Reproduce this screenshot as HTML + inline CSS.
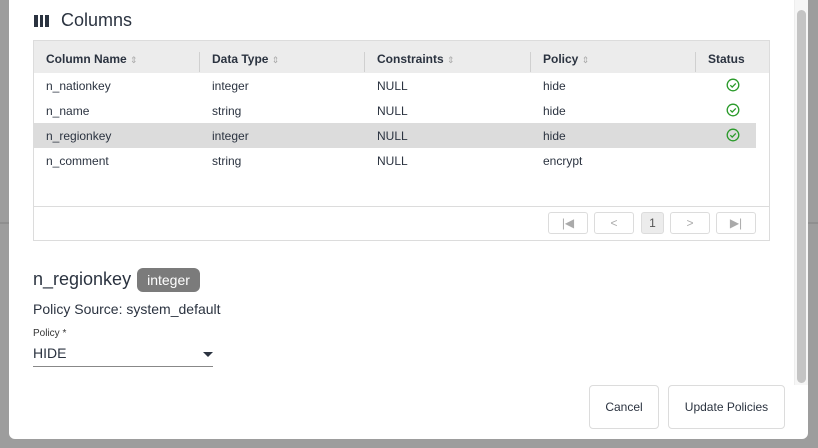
<!DOCTYPE html>
<html><head><style>
*{box-sizing:border-box;margin:0;padding:0}
body{width:818px;height:448px;background:#9d9d9d;font-family:"Liberation Sans",Arial,sans-serif;position:relative;overflow:hidden;color:#2b3340}
.ov{position:absolute;left:0;top:222px;width:818px;height:2px;background:#8f8f8f}
.modal{position:absolute;left:9px;top:-10px;width:799px;height:449px;background:#fff;border-radius:6px;overflow:hidden}
.a{position:absolute}
.tbl{position:absolute;left:33px;top:40px;width:737px;height:201px;border:1px solid #dcdcdc}
.hd{position:absolute;left:0;top:0;width:735px;height:32px;background:#ececec}
.hd div{position:absolute;top:11px;font-size:12px;font-weight:bold;color:#2b3340}
.sep{position:absolute;top:8px;width:1px;height:20px;background:#d0d0d0}
.s{color:#aaa;font-weight:normal;font-size:9px}
.row{position:absolute;left:0;width:722px;height:25px;font-size:12px;color:#2b3340}
.row div{position:absolute;top:6px}
.pb{position:absolute;top:171px;height:22px;border:1px solid #dcdcdc;border-radius:3px;background:#fff;color:#aaa;font-size:12px;text-align:center;line-height:20px}
.btn{position:absolute;top:395px;height:44px;border:1px solid #dcdcdc;border-radius:4px;background:#fff;font-size:12px;text-align:center;line-height:42px;color:#2b3340}
</style></head><body>
<div class="ov"></div>
<div class="modal">
 <div class="a" style="left:25px;top:25px;width:15px;height:12px;display:flex;gap:2px"><span style="flex:1;background:#2b3340"></span><span style="flex:1;background:#2b3340"></span><span style="flex:1;background:#2b3340"></span></div>
 <div class="a" style="left:52px;top:20px;font-size:18px;color:#2b3340">Columns</div>
 <div class="a" style="left:785px;top:10px;width:14px;height:385px;background:#f6f6f6;border-left:1px solid #eee"></div>
 <div class="a" style="left:788px;top:20px;width:9px;height:373px;background:#c4c4c4;border-radius:5px"></div>
 <div class="a" style="left:24px;top:279px;font-size:18px;color:#2b3340">n_regionkey</div>
 <div class="a" style="left:128px;top:278px;width:63px;height:24px;background:#7b7b7b;border-radius:6px;color:#fff;font-size:14px;text-align:center;line-height:24px">integer</div>
 <div class="a" style="left:24px;top:311px;font-size:14px;color:#2b3340">Policy Source: system_default</div>
 <div class="a" style="left:24px;top:338px;font-size:10px;color:#333">Policy *</div>
 <div class="a" style="left:24px;top:355px;font-size:14px;color:#2b3340">HIDE</div>
 <div class="a" style="left:194px;top:362px;width:0;height:0;border-left:5px solid transparent;border-right:5px solid transparent;border-top:5px solid #2b3340"></div>
 <div class="a" style="left:24px;top:376px;width:180px;height:1px;background:#888"></div>
 <div class="btn" style="left:580px;width:70px">Cancel</div>
 <div class="btn" style="left:659px;width:117px">Update Policies</div>
</div>
<div class="tbl">
 <div class="hd">
  <div style="left:12px">Column Name <span class="s">⇕</span></div>
  <div class="sep" style="left:165px"></div>
  <div style="left:178px">Data Type <span class="s">⇕</span></div>
  <div class="sep" style="left:330px"></div>
  <div style="left:343px">Constraints <span class="s">⇕</span></div>
  <div class="sep" style="left:496px"></div>
  <div style="left:509px">Policy <span class="s">⇕</span></div>
  <div class="sep" style="left:661px"></div>
  <div style="left:674px">Status</div>
 </div>
 <div class="row" style="top:32px"><div style="left:12px">n_nationkey</div><div style="left:178px">integer</div><div style="left:343px">NULL</div><div style="left:509px">hide</div><div style="left:692px;top:5px"><svg width="14" height="14"><circle cx="7" cy="7" r="5.8" fill="none" stroke="#2a9a2a" stroke-width="1.3"/><path d="M4.3 7.2l1.9 1.9 3.6-3.7" fill="none" stroke="#2a9a2a" stroke-width="1.3"/></svg></div></div>
 <div class="row" style="top:57px"><div style="left:12px">n_name</div><div style="left:178px">string</div><div style="left:343px">NULL</div><div style="left:509px">hide</div><div style="left:692px;top:5px"><svg width="14" height="14"><circle cx="7" cy="7" r="5.8" fill="none" stroke="#2a9a2a" stroke-width="1.3"/><path d="M4.3 7.2l1.9 1.9 3.6-3.7" fill="none" stroke="#2a9a2a" stroke-width="1.3"/></svg></div></div>
 <div class="row" style="top:82px;background:#dcdcdc"><div style="left:12px">n_regionkey</div><div style="left:178px">integer</div><div style="left:343px">NULL</div><div style="left:509px">hide</div><div style="left:692px;top:5px"><svg width="14" height="14"><circle cx="7" cy="7" r="5.8" fill="none" stroke="#2a9a2a" stroke-width="1.3"/><path d="M4.3 7.2l1.9 1.9 3.6-3.7" fill="none" stroke="#2a9a2a" stroke-width="1.3"/></svg></div></div>
 <div class="row" style="top:107px"><div style="left:12px">n_comment</div><div style="left:178px">string</div><div style="left:343px">NULL</div><div style="left:509px">encrypt</div></div>
 <div style="position:absolute;left:0;top:165px;width:735px;height:1px;background:#dcdcdc"></div>
 <div class="pb" style="left:514px;width:40px">|◀</div>
 <div class="pb" style="left:560px;width:40px">&lt;</div>
 <div class="pb" style="left:607px;width:23px;background:#ececec;color:#555">1</div>
 <div class="pb" style="left:636px;width:40px">&gt;</div>
 <div class="pb" style="left:682px;width:40px">▶|</div>
</div>
</body></html>
